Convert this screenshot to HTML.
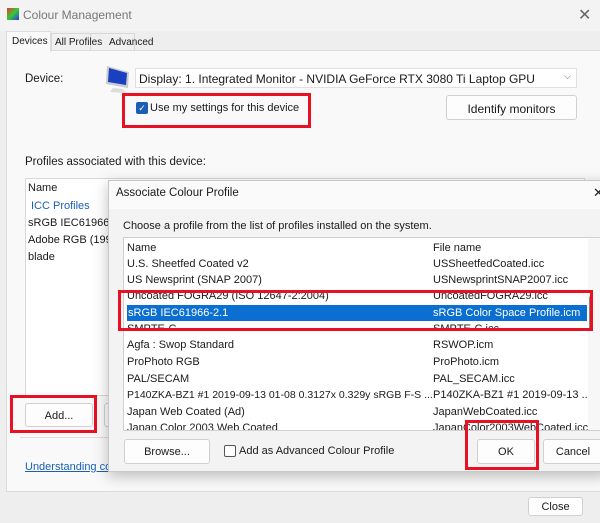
<!DOCTYPE html>
<html><head><style>
*{box-sizing:border-box;margin:0;padding:0}
body{width:600px;height:523px;overflow:hidden;background:#eeeeee;font-family:"Liberation Sans",sans-serif;font-size:11px;color:#1a1a1a;position:relative}
.a{position:absolute;white-space:nowrap}
.btn{position:absolute;background:#fdfdfd;border:1px solid #d0d0d0;border-radius:3px;text-align:center}
.red{position:absolute;border:3px solid #e81123}
</style></head><body>
<div class="a" style="left:0;top:0;width:600px;height:31px;background:#f3f3f3"></div>
<div class="a" style="left:7px;top:8px;width:12px;height:12px;background:linear-gradient(135deg,#e33,#3c3,#33e)"></div>
<div class="a" style="left:23px;top:8px;font-size:12px;color:#777">Colour Management</div>
<div class="a" style="left:578px;top:5px;font-size:16px;color:#666">✕</div>
<!-- tabs -->
<div class="a" style="left:90px;top:33px;width:45px;height:18px;background:#f0f0f0;border:1px solid #d8d8d8"></div>
<div class="a" style="left:51px;top:33px;width:40px;height:18px;background:#f0f0f0;border:1px solid #d8d8d8"></div>
<div class="a" style="left:6px;top:50px;width:606px;height:442px;background:#f9f9f9;border:1px solid #dcdcdc"></div>
<div class="a" style="left:6px;top:31px;width:45px;height:21px;background:#f9f9f9;border:1px solid #dcdcdc;border-bottom:none"></div>
<div class="a" style="left:12px;top:36px;font-size:10px">Devices</div>
<div class="a" style="left:55px;top:37px;font-size:10px">All Profiles</div>
<div class="a" style="left:109px;top:37px;font-size:10px">Advanced</div>
<div class="a" style="left:25px;top:73px;font-size:11.5px">Device:</div>
<svg class="a" style="left:104px;top:64px" width="30" height="30"><polygon points="3,2 25,8 24,24 2,20" fill="#ccc"/><polygon points="5,4 23,9 22,21 4,18" fill="#1840c0"/><polygon points="9,24 19,25 22,29 6,28" fill="#ddd"/></svg>
<div class="a" style="left:135px;top:68px;width:442px;height:20px;background:#fff;border:1px solid #e0e0e0;padding:3px 0 0 3px;font-size:12px">Display: 1. Integrated Monitor - NVIDIA GeForce RTX 3080 Ti Laptop GPU</div>
<div class="a" style="left:564px;top:71px;font-size:9px;color:#555">⌵</div>
<div class="a" style="left:136px;top:102px;width:12px;height:12px;background:#1a5fb4;border-radius:2px;color:#fff;font-size:9px;text-align:center;line-height:12px">✓</div>
<div class="a" style="left:150px;top:102px;font-size:11px">Use my settings for this device</div>
<div class="red" style="left:122px;top:93px;width:189px;height:35px"></div>
<div class="btn" style="left:446px;top:95px;width:131px;height:25px;padding-top:6px;font-size:12px">Identify monitors</div>
<div class="a" style="left:25px;top:156px;font-size:11.5px">Profiles associated with this device:</div>
<div class="a" style="left:25px;top:178px;width:560px;height:218px;background:#fff;border:1px solid #d8d8d8"></div>
<div class="a" style="left:28px;top:182px">Name</div>
<div class="a" style="left:31px;top:200px;color:#1a5fb4">ICC Profiles</div>
<div class="a" style="left:28px;top:217px">sRGB IEC61966-2</div>
<div class="a" style="left:28px;top:234px">Adobe RGB (1998</div>
<div class="a" style="left:28px;top:251px">blade</div>
<div class="btn" style="left:25px;top:403px;width:68px;height:24px;padding-top:6px">Add...</div>
<div class="btn" style="left:104px;top:403px;width:20px;height:24px"></div>
<div class="red" style="left:10px;top:395px;width:87px;height:38px"></div>
<div class="a" style="left:20px;top:437px;width:570px;height:1px;background:#ddd"></div>
<div class="a" style="left:25px;top:461px;color:#1a5fb4;text-decoration:underline">Understanding co</div>
<div class="a" style="left:0;top:492px;width:600px;height:31px;background:#eeeeee"></div>
<div class="btn" style="left:528px;top:497px;width:55px;height:19px;padding-top:3px">Close</div>
<!-- dialog -->
<div class="a" style="left:108px;top:180px;width:500px;height:292px;background:#f3f3f3;border:1px solid #c8c8c8;box-shadow:0 4px 14px rgba(0,0,0,.25)"></div>
<div class="a" style="left:109px;top:181px;width:500px;height:28px;background:#fafafa"></div>
<div class="a" style="left:116px;top:187px;font-size:11.5px">Associate Colour Profile</div>
<div class="a" style="left:593px;top:185px;font-size:13px">✕</div>
<div class="a" style="left:123px;top:220px">Choose a profile from the list of profiles installed on the system.</div>
<div class="a" style="left:123px;top:237px;width:480px;height:194px;background:#fff;border:1px solid #d0d0d0;overflow:hidden">
<div class="a" style="left:3px;top:4px">Name</div><div class="a" style="left:309px;top:4px">File name</div>
<div class="a" style="left:3px;top:20px">U.S. Sheetfed Coated v2</div><div class="a" style="left:309px;top:20px">USSheetfedCoated.icc</div>
<div class="a" style="left:3px;top:36px">US Newsprint (SNAP 2007)</div><div class="a" style="left:309px;top:36px">USNewsprintSNAP2007.icc</div>
<div class="a" style="left:3px;top:55px;width:460px;height:9px;overflow:hidden"><div class="a" style="left:0;top:-3px">Uncoated FOGRA29 (ISO 12647-2:2004)</div><div class="a" style="left:306px;top:-3px">UncoatedFOGRA29.icc</div></div>
<div class="a" style="left:3px;top:67px;width:460px;height:16px;background:#0a6fd0;color:#fff"><div class="a" style="left:1px;top:2px">sRGB IEC61966-2.1</div><div class="a" style="left:306px;top:2px">sRGB Color Space Profile.icm</div></div>
<div class="a" style="left:3px;top:85px;width:460px;height:6px;overflow:hidden"><div class="a" style="left:0;top:0">SMPTE-C</div><div class="a" style="left:306px;top:0">SMPTE-C.icc</div></div>
<div class="a" style="left:3px;top:101px">Agfa : Swop Standard</div><div class="a" style="left:309px;top:101px">RSWOP.icm</div>
<div class="a" style="left:3px;top:118px">ProPhoto RGB</div><div class="a" style="left:309px;top:118px">ProPhoto.icm</div>
<div class="a" style="left:3px;top:135px">PAL/SECAM</div><div class="a" style="left:309px;top:135px">PAL_SECAM.icc</div>
<div class="a" style="left:3px;top:151px;font-size:10.5px">P140ZKA-BZ1 #1 2019-09-13 01-08 0.3127x 0.329y sRGB F-S ...</div><div class="a" style="left:309px;top:151px">P140ZKA-BZ1 #1 2019-09-13 ...</div>
<div class="a" style="left:3px;top:168px">Japan Web Coated (Ad)</div><div class="a" style="left:309px;top:168px">JapanWebCoated.icc</div>
<div class="a" style="left:3px;top:184px">Japan Color 2003 Web Coated</div><div class="a" style="left:309px;top:184px">JapanColor2003WebCoated.icc</div>
<div class="a" style="left:464px;top:0;width:14px;height:194px;background:#f7f7f7"></div>
<div class="a" style="left:465px;top:58px;width:4px;height:34px;background:#888;border-radius:2px"></div>
</div>
<div class="red" style="left:118px;top:290px;width:475px;height:41px"></div>
<div class="btn" style="left:124px;top:439px;width:86px;height:25px;padding-top:6px">Browse...</div>
<div class="a" style="left:224px;top:445px;width:12px;height:12px;border:1px solid #555;border-radius:2px;background:#fff"></div>
<div class="a" style="left:239px;top:445px">Add as Advanced Colour Profile</div>
<div class="btn" style="left:477px;top:439px;width:58px;height:25px;padding-top:6px">OK</div>
<div class="btn" style="left:543px;top:439px;width:60px;height:25px;padding-top:6px">Cancel</div>
<div class="red" style="left:465px;top:420px;width:74px;height:50px"></div>
</body></html>
